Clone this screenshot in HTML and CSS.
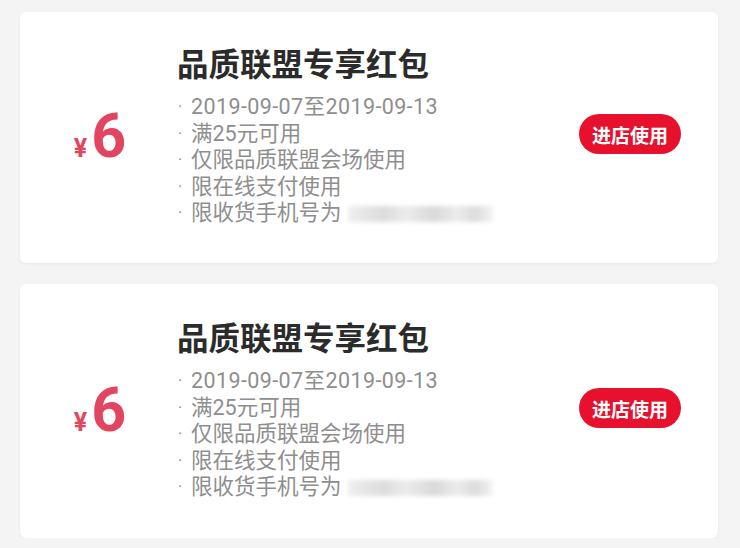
FILE: index.html
```html
<!DOCTYPE html>
<html>
<head>
  <meta charset="UTF-8">
  <title>红包</title>
  <link rel="stylesheet" href="styles.css">
</head>
<body>

  <div class="list">
    <div class="coupon">
      <div class="price"><span class="yen">¥</span><span class="amount">6</span></div>
      <div class="info">
        <div class="title">品质联盟专享红包</div>
        <ul class="rules">
          <li><span class="date">2019-09-07至2019-09-13</span></li>
          <li>满25元可用</li>
          <li>仅限品质联盟会场使用</li>
          <li>限在线支付使用</li>
          <li>限收货手机号为<span class="phone"></span></li>
        </ul>
      </div>
      <button class="use">进店使用</button>
    </div>

    <div class="coupon">
      <div class="price"><span class="yen">¥</span><span class="amount">6</span></div>
      <div class="info">
        <div class="title">品质联盟专享红包</div>
        <ul class="rules">
          <li><span class="date">2019-09-07至2019-09-13</span></li>
          <li>满25元可用</li>
          <li>仅限品质联盟会场使用</li>
          <li>限在线支付使用</li>
          <li>限收货手机号为<span class="phone"></span></li>
        </ul>
      </div>
      <button class="use">进店使用</button>
    </div>
  </div>

</body>
</html>
```

FILE: styles.css
```css
body {
  margin: 0;
  background-color: #f4f4f4;
  font-family: Roboto, "Noto Sans CJK SC", sans-serif;
}
.list {
  display: flex;
  flex-direction: column;
  gap: 21px;
  padding: 12px 22px 0 20px;
}
.coupon {
  display: flex;
  align-items: center;
  background-color: #fff;
  border-radius: 6px;
  box-shadow: 0 1px 3px rgba(0, 0, 0, 0.06);
  padding: 34px 37px 36px 0;
}
.coupon + .coupon {
  padding-top: 36px;
  padding-bottom: 37px;
}
.price {
  width: 158px;
  display: flex;
  justify-content: center;
  align-items: baseline;
  color: #e2455f;
  padding-left: 2px;
  box-sizing: border-box;
}
.yen {
  font-size: 25px;
  font-weight: bold;
  margin-right: 4px;
}
.amount {
  font-size: 61px;
  font-weight: bold;
  line-height: 1;
}
.info {
  flex: 1;
}
.title {
  font-size: 31.5px;
  font-weight: bold;
  color: #2b2b2b;
  line-height: 40px;
  margin-bottom: 8px;
  margin-left: -1px;
}
.rules {
  list-style: none;
  margin: 0;
  padding: 0;
  font-size: 21.5px;
  line-height: 26.6px;
  color: #8e8e8e;
}
.rules li {
  display: flex;
  align-items: center;
}
.rules li::before {
  content: "·";
  width: 13px;
  font-size: 16px;
}
.date {
  letter-spacing: 0.4px;
}
.phone {
  display: inline-block;
  width: 145px;
  height: 16px;
  margin-left: 6px;
  background: linear-gradient(90deg, #efefef, #dcdcdc 25%, #ececec 40%, #d9d9d9 60%, #ececec 75%, #dcdcdc 88%, #f4f4f4);
  filter: blur(2px);
}
.use {
  width: 102px;
  height: 40px;
  border: none;
  border-radius: 20px;
  background-color: #e8112d;
  color: #fff;
  font-family: "Noto Sans CJK SC", sans-serif;
  font-size: 19px;
  font-weight: bold;
  padding: 0;
  margin-bottom: 4px;
}
```
